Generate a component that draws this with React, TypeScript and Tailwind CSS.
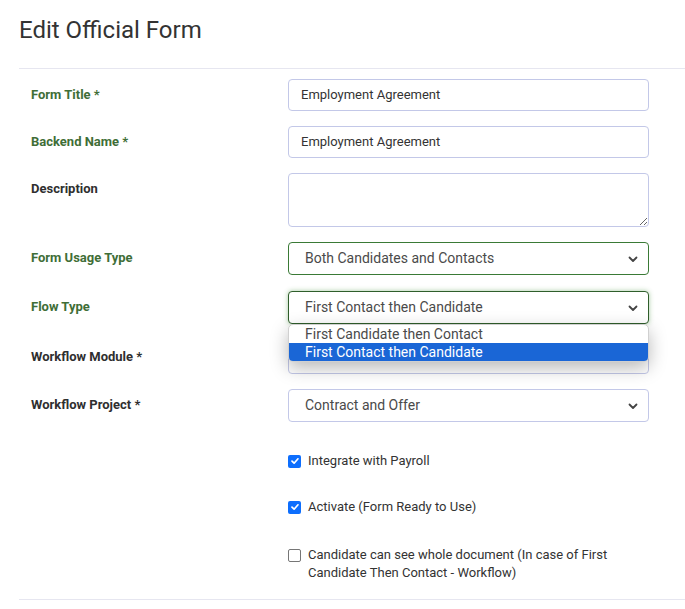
import React from 'react';

const font = { fontFamily: 'Roboto, "Liberation Sans", sans-serif' };

const Chevron: React.FC = () => (
  <svg width="10" height="10" viewBox="0 0 10 10" className="text-[#444]">
    <path d="M1.5 3.5 L5 7 L8.5 3.5" fill="none" stroke="currentColor" strokeWidth="1.8" strokeLinecap="round" strokeLinejoin="round" />
  </svg>
);

interface RowProps {
  label: string;
  green?: boolean;
  children: React.ReactNode;
  className?: string;
}

const Row: React.FC<RowProps> = ({ label, green, children, className }) => (
  <div className={`flex items-start ${className ?? 'mb-[15px]'}`}>
    <div
      className={`w-[257px] shrink-0 h-8 flex items-center text-[13px] font-bold ${
        green ? 'text-[#3f6e37]' : 'text-[#2f2f2f]'
      }`}
    >
      {label}
    </div>
    <div className="w-[361px] relative">{children}</div>
  </div>
);

const TextInput: React.FC<{ value: string }> = ({ value }) => (
  <div className="h-8 rounded border border-[#c3c8e8] px-3 flex items-center text-[13px] text-[#333]">
    {value}
  </div>
);

const Select: React.FC<{ value: string; variant?: 'green' | 'focus' | 'plain' }> = ({ value, variant = 'plain' }) => {
  const styles =
    variant === 'green'
      ? 'border-[#3a7a36]'
      : variant === 'focus'
      ? 'border-[#2f5e2b] shadow-[0_0_5px_rgba(60,140,50,0.45)]'
      : 'border-[#c3c8e8]';
  return (
    <div className={`h-[33px] rounded border ${styles} pl-4 pr-2.5 flex items-center justify-between text-[14px] text-[#4a4a4a] bg-white`}>
      <span>{value}</span>
      <Chevron />
    </div>
  );
};

const Checkbox: React.FC<{ checked?: boolean; children: React.ReactNode }> = ({ checked, children }) => (
  <div className="flex items-start gap-[7px] text-[13px] text-[#333] leading-[18px]">
    {checked ? (
      <span className="mt-[2.5px] w-[13px] h-[13px] shrink-0 rounded-[2px] bg-[#0d6efd] flex items-center justify-center">
        <svg width="10" height="10" viewBox="0 0 10 10">
          <path d="M2 5.2 L4.1 7.2 L8 2.8" fill="none" stroke="white" strokeWidth="1.7" strokeLinecap="round" strokeLinejoin="round" />
        </svg>
      </span>
    ) : (
      <span className="mt-[2.5px] w-[13px] h-[13px] shrink-0 rounded-[2px] border border-[#767676] bg-white" />
    )}
    <span>{children}</span>
  </div>
);

export default function App() {
  return (
    <div className="w-[685px] h-[609px] bg-white overflow-hidden pl-[19px]" style={font}>
      <h1 className="h-[68px] pt-[14px] text-[24px] text-[#333] leading-[32px]">Edit Official Form</h1>
      <div className="border-t border-[#e6e6f0] pl-3 pt-[10px]">
        <Row label="Form Title *" green>
          <TextInput value="Employment Agreement" />
        </Row>
        <Row label="Backend Name *" green>
          <TextInput value="Employment Agreement" />
        </Row>
        <Row label="Description">
          <textarea className="block w-full h-[54px] rounded border border-[#c3c8e8] outline-none" />
        </Row>
        <Row label="Form Usage Type" green className="mb-4">
          <Select value="Both Candidates and Contacts" variant="green" />
        </Row>
        <Row label="Flow Type" green className="mb-[17px]">
          <Select value="First Contact then Candidate" variant="focus" />
          <div className="absolute left-0 right-0 top-[33px] z-10 bg-white rounded-[5px] shadow-[0_6px_18px_rgba(0,0,0,0.28)] border border-[#d0d0d0] overflow-hidden text-[14px] leading-[18px]">
            <div className="pl-4 text-[#4a4a4a]">First Candidate then Contact</div>
            <div className="pl-4 bg-[#1a66d6] text-white">First Contact then Candidate</div>
          </div>
        </Row>
        <Row label="Workflow Module *">
          <Select value="" />
        </Row>
        <Row label="Workflow Project *" className="mb-0">
          <Select value="Contract and Offer" />
        </Row>
        <div className="pl-[257px] pt-[30px] pb-[17px] flex flex-col">
          <div className="mb-[28px]">
            <Checkbox checked>Integrate with Payroll</Checkbox>
          </div>
          <div className="mb-[30px]">
            <Checkbox checked>Activate (Form Ready to Use)</Checkbox>
          </div>
          <Checkbox>
            Candidate can see whole document (In case of First
            <br />
            Candidate Then Contact - Workflow)
          </Checkbox>
        </div>
      </div>
      <div className="border-t border-[#e6e6f0]" />
    </div>
  );
}
